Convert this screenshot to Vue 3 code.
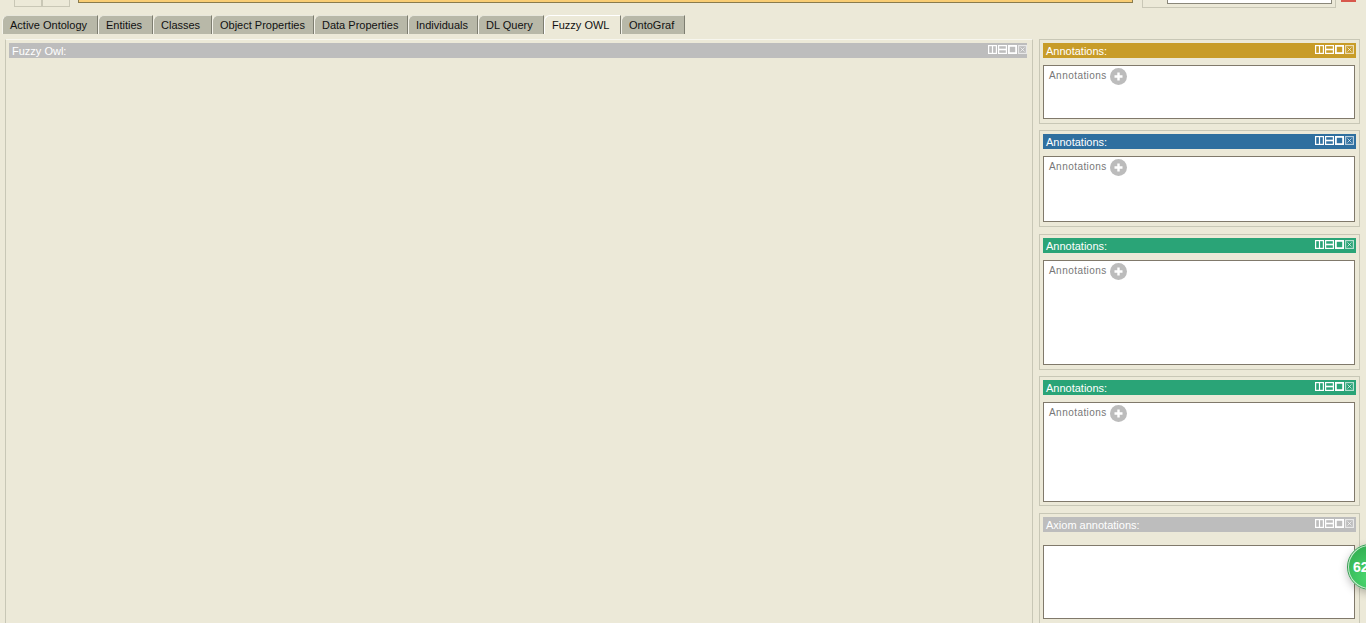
<script setup>
const tabs = [
  { name: 'Active Ontology', w: 96 },
  { name: 'Entities', w: 55 },
  { name: 'Classes', w: 59 },
  { name: 'Object Properties', w: 102 },
  { name: 'Data Properties', w: 94 },
  { name: 'Individuals', w: 70 },
  { name: 'DL Query', w: 66 },
  { name: 'Fuzzy OWL', w: 77, active: true },
  { name: 'OntoGraf', w: 64 },
]
const panels = [
  { title: 'Annotations:', color: '#c89c28', h: 85, body: 54, gap: 7, mb: 6, label: true },
  { title: 'Annotations:', color: '#2f6f9f', h: 97, body: 66, gap: 7, mb: 7, label: true },
  { title: 'Annotations:', color: '#2aa477', h: 136, body: 105, gap: 7, mb: 6, label: true },
  { title: 'Annotations:', color: '#2aa477', h: 130, body: 100, gap: 7, mb: 7, label: true },
  { title: 'Axiom annotations:', color: '#bdbdbd', h: 116, body: 74, gap: 13, mb: 0, label: false },
]
</script>

<template>
  <div class="app">
    <div class="top">
      <div class="navs"><span class="nav"></span><span class="nav"></span></div>
      <div class="address"></div>
      <div class="search"><div class="search-input"></div></div>
      <div class="red"></div>
    </div>
    <div class="tabs">
      <div
        v-for="t in tabs"
        :key="t.name"
        class="tab"
        :class="{ active: t.active }"
        :style="{ width: t.w + 'px' }"
      >{{ t.name }}</div>
    </div>
    <div class="workspace">
      <section class="main-panel">
        <header class="bar grey">
          <span class="title">Fuzzy Owl:</span>
          <span class="icons flush">
            <svg v-for="i in 4" :key="i" width="9" height="9" viewBox="0 0 9 9">
              <rect x="0.6" y="0.6" width="7.8" height="7.8" fill="none" stroke="#fff" stroke-width="1.2" :opacity="i === 4 ? 0.65 : 1" />
              <path v-if="i === 1" d="M4.5 0V9" stroke="#fff" stroke-width="1.2" fill="none" />
              <path v-if="i === 2" d="M0 4.5H9" stroke="#fff" stroke-width="1.6" fill="none" />
              <rect v-if="i === 3" x="1.2" y="1.2" width="6.6" height="6.6" fill="none" stroke="#fff" stroke-width="1" />
              <path v-if="i === 4" d="M2.5 2.5L6.5 6.5M6.5 2.5L2.5 6.5" stroke="#fff" fill="none" opacity="0.65" />
            </svg>
          </span>
        </header>
      </section>
      <aside class="side">
        <section
          v-for="(p, n) in panels"
          :key="n"
          class="side-panel"
          :style="{ height: p.h + 'px', marginBottom: p.mb + 'px' }"
        >
          <header class="bar" :style="{ background: p.color }">
            <span class="title">{{ p.title }}</span>
            <span class="icons">
              <svg v-for="i in 4" :key="i" width="9" height="9" viewBox="0 0 9 9">
                <rect x="0.6" y="0.6" width="7.8" height="7.8" fill="none" stroke="#fff" stroke-width="1.2" :opacity="i === 4 ? 0.65 : 1" />
                <path v-if="i === 1" d="M4.5 0V9" stroke="#fff" stroke-width="1.2" fill="none" />
                <path v-if="i === 2" d="M0 4.5H9" stroke="#fff" stroke-width="1.6" fill="none" />
                <rect v-if="i === 3" x="1.2" y="1.2" width="6.6" height="6.6" fill="none" stroke="#fff" stroke-width="1" />
                <path v-if="i === 4" d="M2.5 2.5L6.5 6.5M6.5 2.5L2.5 6.5" stroke="#fff" fill="none" opacity="0.65" />
              </svg>
            </span>
          </header>
          <div class="box" :style="{ height: p.body + 'px', marginTop: p.gap + 'px' }">
            <div v-if="p.label" class="label">
              <span class="label-text">Annotations</span>
              <svg width="17" height="17" viewBox="0 0 17 17">
                <circle cx="8.5" cy="8.5" r="8.5" fill="#bcbcbc" />
                <path d="M8.5 4.5V12.5M4.5 8.5H12.5" stroke="#fff" stroke-width="2.4" />
              </svg>
            </div>
          </div>
        </section>
      </aside>
    </div>
    <div class="badge"><span>62</span></div>
  </div>
</template>

<style>
html, body { margin: 0; background: #ece9d8; }
</style>

<style scoped>
.app {
  position: relative;
  width: 1366px;
  height: 623px;
  overflow: hidden;
  background: #ece9d8;
  font-family: "Liberation Sans", Arial, sans-serif;
  font-size: 11px;
}
.top {
  height: 15px;
  display: flex;
  align-items: flex-start;
}
.navs { display: flex; margin-left: 14px; }
.nav {
  width: 26px;
  height: 6px;
  border: 1px solid #c9c7b6;
  border-top: 0;
}
.address {
  width: 1053px;
  height: 2px;
  margin-left: 8px;
  border: 1px solid #8a7b4c;
  border-top: 0;
  background: #f9cd74;
}
.search {
  width: 165px;
  height: 7px;
  margin-left: 9px;
  padding-left: 24px;
  padding-right: 3px;
  border: 1px solid #c9c7b6;
  border-top: 0;
  display: flex;
}
.search-input {
  width: 164px;
  height: 3px;
  background: #fff;
  border: 1px solid #8a877a;
  border-top: 0;
}
.red {
  width: 15px;
  height: 2px;
  margin-left: 5px;
  background: #d8584c;
}
.tabs {
  height: 19px;
  display: flex;
  padding-left: 2px;
  align-items: flex-end;
}
.tab {
  box-sizing: border-box;
  height: 19px;
  padding: 2px 0 0 7px;
  background: #b8b8a8;
  border: 1px solid #9c9c8c;
  border-bottom: 0;
  border-left-color: #f4f3ea;
  border-top-color: #e8e7dc;
  border-top-left-radius: 6px;
  border-right-color: #7d7d70;
  color: #111;
  line-height: 15px;
  white-space: nowrap;
}
.tab.active {
  background: #ece9d8;
  border-top-color: #fff;
  border-left-color: #fff;
}
.workspace {
  display: flex;
  margin-top: 5px;
  padding-left: 5px;
  gap: 6px;
}
.main-panel {
  box-sizing: border-box;
  width: 1028px;
  height: 584px;
  padding: 3px 5px 0 3px;
  border-top: 1px solid #f7f6ee;
  border-left: 1px solid #c8c7b6;
  border-right: 1px solid #c8c7b6;
}
.side { width: 321px; }
.side-panel {
  box-sizing: border-box;
  padding: 3px 3px 0 3px;
  border: 1px solid #c8c7b6;
}
.bar {
  height: 15px;
  display: flex;
  align-items: center;
  justify-content: space-between;
  color: #fff;
  padding: 0 3px;
}
.bar.grey { background: #bdbdbd; }
.title { line-height: 15px; padding-top: 1px; }
.icons {
  display: flex;
  gap: 1px;
  margin-top: 0;
  margin-right: -1px;
  position: relative;
  top: -1px;
}
.icons.flush { margin-right: -3px; }
.box {
  box-sizing: border-box;
  width: 312px;
  background: #fff;
  border: 1px solid #80796b;
}
.label {
  display: flex;
  align-items: center;
  gap: 3px;
  padding: 2px 0 0 5px;
  color: #777;
  font-size: 10px;
  letter-spacing: 0.45px;
}
.label-text { margin-top: -2px; }
.badge {
  position: absolute;
  left: 1347px;
  top: 544px;
  width: 46px;
  height: 46px;
  box-sizing: border-box;
  border-radius: 50%;
  border: 2px solid #c9ecd0;
  outline: 1px solid #3c9a55;
  outline-offset: -1px;
  background: radial-gradient(circle at 50% 75%, #4bd970, #2ea84d);
  box-shadow: 0 3px 8px rgba(0, 0, 0, 0.25);
  color: #fff;
  font-family: "Liberation Sans", sans-serif;
  font-size: 14px;
  font-weight: 700;
  line-height: 42px;
  padding-left: 4px;
}
</style>
